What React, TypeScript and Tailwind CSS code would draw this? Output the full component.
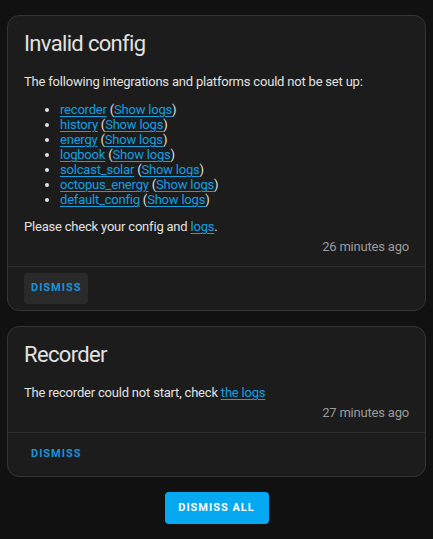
import React from "react";

const ITEMS = ["recorder", "history", "energy", "logbook", "solcast_solar", "octopus_energy", "default_config"];

function Link({ children }: { children: React.ReactNode }) {
  return <a className="text-[#149fe3] underline underline-offset-[2px] cursor-pointer">{children}</a>;
}

function Card({
  title,
  time,
  hoverBtn,
  children,
}: {
  title: string;
  time: string;
  hoverBtn?: boolean;
  children: React.ReactNode;
}) {
  return (
    <div className="rounded-[12px] border border-[#343434] bg-[#1c1c1c]">
      <div className="px-4 pt-[14px] pb-[12px]">
        <h1 className="text-[22px] leading-[28px] text-[#e1e1e1] tracking-[-0.03em]">{title}</h1>
        <div className="mt-[16px] text-[13px] leading-[15px] tracking-[-0.2px] text-[#e1e1e1]">{children}</div>
        <div className="mt-[5px] text-right text-[13px] leading-[15px] tracking-[-0.2px] text-[#9b9b9b]">{time}</div>
      </div>
      <div className="border-t border-[#2e2e2e] px-4 pt-[6px] pb-[6px]">
        <button
          className={`h-[31px] rounded-[4px] px-[7px] text-[11px] font-bold tracking-[0.09em] text-[#1a94d9] ${
            hoverBtn ? "bg-[#2a2a2a]" : ""
          }`}
        >
          DISMISS
        </button>
      </div>
    </div>
  );
}

export default function App() {
  return (
    <div className="min-h-[539px] w-[433px] bg-[#111111] px-[7px] pt-[15px]" style={{ fontFamily: "Roboto, 'Noto Sans', sans-serif" }}>
      <Card title="Invalid config" time="26 minutes ago" hoverBtn>
        <p>The following integrations and platforms could not be set up:</p>
        <ul className="mt-[13px] list-disc pl-[36px] marker:text-[#e1e1e1]">
          {ITEMS.map((it) => (
            <li key={it}>
              <Link>{it}</Link> (<Link>Show logs</Link>)
            </li>
          ))}
        </ul>
        <p className="mt-[12px]">
          Please check your config and <Link>logs</Link>.
        </p>
      </Card>
      <div className="h-[15px]" />
      <Card title="Recorder" time="27 minutes ago">
        <p>
          The recorder could not start, check <Link>the logs</Link>
        </p>
      </Card>
      <div className="flex justify-center pt-[15px]">
        <button className="h-[32px] w-[104px] rounded-[4px] bg-[#06a8f1] text-[11px] font-bold tracking-[0.09em] text-white">
          DISMISS ALL
        </button>
      </div>
    </div>
  );
}
